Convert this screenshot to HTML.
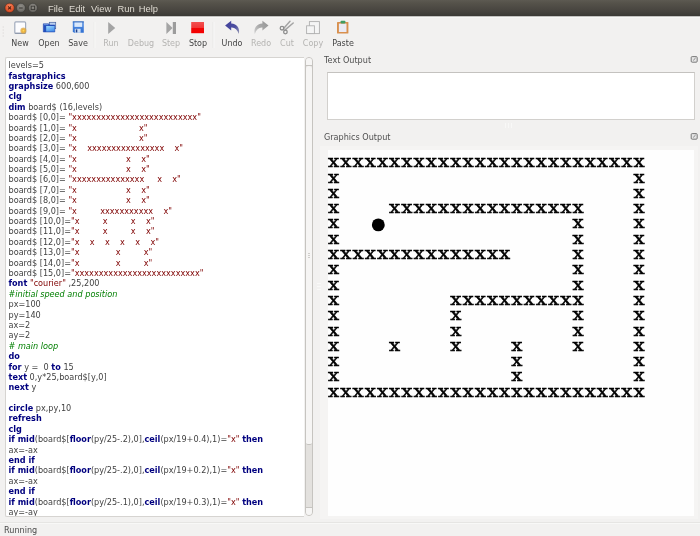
<!DOCTYPE html>
<html><head><meta charset="utf-8"><title>BASIC-256</title>
<style>
html,body{margin:0;padding:0;}
.abs,.tl{will-change:transform;}
body{width:700px;height:536px;overflow:hidden;background:#f2f1f0;font-family:"DejaVu Sans","Liberation Sans",sans-serif;position:relative;color:#3c3c3c;}
.abs{position:absolute;}
#title{left:0;top:0;width:700px;height:16px;background:linear-gradient(#5d5a52,#55524a 20%,#46433e 72%,#3b3935);}
#tline{left:0;top:16px;width:700px;height:2px;background:linear-gradient(#c4c3c1 50%,#f7f7f6 50%);}
#title .m{position:absolute;top:2.7px;font-size:9.4px;line-height:12px;color:#dfdbd2;font-family:"Liberation Sans","DejaVu Sans",sans-serif;white-space:nowrap;}
.wb{position:absolute;top:3.5px;width:9px;height:9px;border-radius:50%;}
#toolbar{left:0;top:16px;width:700px;height:36px;background:#f2f1f0;}
.tl{position:absolute;top:37.5px;font-size:8px;line-height:11px;color:#444;white-space:nowrap;transform:translateX(-50%);}
.tl.dis{color:#b5b4b2;}
.ic{position:absolute;}
#editor{left:5px;top:57px;width:298px;height:458px;background:#fff;border:1px solid #d6d4d1;border-right:none;border-radius:2px 0 0 2px;overflow:hidden;}
#code{position:absolute;left:2.5px;top:2.2px;font-size:8.13px;color:#424242;}
#code .ln{height:10.4px;line-height:10.4px;white-space:pre;}
#code b{color:#00007f;font-weight:bold;}
#code s{color:#7f0000;text-decoration:none;}
#code i{color:#007f00;font-style:italic;}
#vsb{left:305px;top:57px;width:8px;height:459px;background:#e3e1de;border:1px solid #c6c4c0;border-radius:4px;box-sizing:border-box;}
#vsb .up{position:absolute;left:0;top:0;width:6px;height:7px;background:#f6f5f4;border-bottom:1px solid #c6c4c0;border-radius:3px 3px 0 0;}
#vsb .th{position:absolute;left:0;top:8px;width:6px;height:378px;background:#f6f5f4;border-bottom:1px solid #c6c4c0;border-radius:3px 3px 2px 2px;}
#vsb .dn{position:absolute;left:0;bottom:0;width:6px;height:7px;background:#f6f5f4;border-top:1px solid #c6c4c0;border-radius:0 0 3px 3px;}
.lbl{font-size:8.1px;line-height:11px;color:#505050;white-space:nowrap;}
#tout{left:327px;top:72px;width:368px;height:48px;background:#fff;border:1px solid #d2d0cd;border-top-color:#c4c2bf;box-sizing:border-box;}
#gout{left:328px;top:150px;width:366px;height:366px;background:#fefefe;}
#gbg{left:320px;top:146px;width:378px;height:373px;background:#f5f4f3;}
#status{left:3.6px;top:524.7px;font-size:8.1px;line-height:11px;color:#4a4a4a;}
</style></head><body>
<div id="title" class="abs">
 <svg class="abs" style="left:0;top:0" width="44" height="16" viewBox="0 0 44 16">
  <defs>
   <radialGradient id="gcl" cx="0.5" cy="0.35" r="0.7"><stop offset="0" stop-color="#f58a62"/><stop offset="0.6" stop-color="#e5582e"/><stop offset="1" stop-color="#b9401f"/></radialGradient>
   <radialGradient id="ggr" cx="0.5" cy="0.35" r="0.7"><stop offset="0" stop-color="#8f8d87"/><stop offset="0.6" stop-color="#75736e"/><stop offset="1" stop-color="#55534f"/></radialGradient>
  </defs>
  <circle cx="9.6" cy="7.9" r="4.7" fill="url(#gcl)" stroke="#3a2a24" stroke-width="0.5"/>
  <path d="M8.1 6.4 L11.1 9.4 M11.1 6.4 L8.1 9.4" stroke="#5e2412" stroke-width="1.1"/>
  <circle cx="20.9" cy="7.9" r="4.6" fill="url(#ggr)" stroke="#33322e" stroke-width="0.5"/>
  <path d="M19.1 8 H22.7" stroke="#3c3b37" stroke-width="1.1"/>
  <circle cx="32.9" cy="7.9" r="4.6" fill="url(#ggr)" stroke="#33322e" stroke-width="0.5"/>
  <rect x="31.2" y="6.2" width="3.4" height="3.4" fill="none" stroke="#3c3b37" stroke-width="0.9"/>
 </svg>
 <span class="m" style="left:48px">File</span>
 <span class="m" style="left:69px">Edit</span>
 <span class="m" style="left:91px">View</span>
 <span class="m" style="left:117.5px">Run</span>
 <span class="m" style="left:138.8px">Help</span>
</div>
<div id="toolbar" class="abs"></div><div id="tline" class="abs"></div>
<!-- toolbar labels -->
<span class="tl" style="left:20px">New</span>
<span class="tl" style="left:49px">Open</span>
<span class="tl" style="left:78px">Save</span>
<span class="tl dis" style="left:110.5px">Run</span>
<span class="tl dis" style="left:140.5px">Debug</span>
<span class="tl dis" style="left:171px">Step</span>
<span class="tl" style="left:197.5px">Stop</span>
<span class="tl" style="left:232px">Undo</span>
<span class="tl dis" style="left:261px">Redo</span>
<span class="tl dis" style="left:287px">Cut</span>
<span class="tl dis" style="left:313px">Copy</span>
<span class="tl" style="left:343px">Paste</span>
<svg class="abs" style="left:0;top:16px" width="700" height="36" viewBox="0 16 700 36">
 <defs>
  <linearGradient id="gfold" x1="0" y1="0" x2="0.6" y2="1"><stop offset="0" stop-color="#9fdcff"/><stop offset="1" stop-color="#4a92ea"/></linearGradient>
  <linearGradient id="gsave" x1="0" y1="0" x2="0" y2="1"><stop offset="0" stop-color="#5b93e4"/><stop offset="1" stop-color="#2f6fd2"/></linearGradient>
  <linearGradient id="gstop" x1="0" y1="0" x2="0" y2="1"><stop offset="0" stop-color="#f25050"/><stop offset="0.5" stop-color="#f03838"/><stop offset="0.52" stop-color="#f00606"/><stop offset="1" stop-color="#f40000"/></linearGradient>
  <radialGradient id="gstar"><stop offset="0" stop-color="#ffe468"/><stop offset="0.45" stop-color="#eeb13a"/><stop offset="1" stop-color="#d49a30" stop-opacity="0.55"/></radialGradient>
 <linearGradient id="gundo" gradientUnits="userSpaceOnUse" x1="226" y1="24" x2="240" y2="33"><stop offset="0" stop-color="#43439c"/><stop offset="0.55" stop-color="#4c4ea0"/><stop offset="1" stop-color="#9a9cb4"/></linearGradient>
  <linearGradient id="gredo" gradientUnits="userSpaceOnUse" x1="268" y1="24" x2="254" y2="33"><stop offset="0" stop-color="#989898"/><stop offset="0.5" stop-color="#a8a8a8"/><stop offset="1" stop-color="#cfcfcf"/></linearGradient>
 </defs>
 <!-- New -->
 <rect x="14.8" y="21.9" width="10.8" height="11.6" rx="1" fill="#fcfcfe" stroke="#a2acbd" stroke-width="1.2"/>
 <rect x="15.2" y="32.6" width="10" height="1.3" fill="#909aac"/>
 <circle cx="23.4" cy="30.7" r="3.1" fill="url(#gstar)"/>
 <!-- Open -->
 <rect x="49.3" y="22.3" width="6.4" height="6.4" fill="#bcd0f0" stroke="#45629f" stroke-width="0.7"/>
 <path d="M43.3 23.8 H48.6 L49.6 25 H54.8 V32 H43.3 Z" fill="#2450bd" stroke="#1d43a8" stroke-width="0.5"/>
 <rect x="43.8" y="24.3" width="4.6" height="0.8" fill="#7fa6e8"/>
 <rect x="46.2" y="26" width="8.3" height="5.5" fill="url(#gfold)"/>
 <!-- Save -->
 <path d="M72.8 21.4 H83.8 V32.8 H74 L72.8 31.6 Z" fill="url(#gsave)"/>
 <rect x="72.8" y="21.4" width="11" height="1.1" fill="#3b6cb8"/>
 <rect x="74.4" y="22.5" width="7.8" height="4.4" fill="#d9e8fb"/>
 <rect x="74.8" y="28.8" width="5.8" height="4" fill="#cfe0f6"/>
 <rect x="75.8" y="29.4" width="1.5" height="3" fill="#1e3f88"/>
 <!-- Run -->
 <path d="M108.2 22 L115.2 28 L108.2 34 Z" fill="#a4a4a4"/>
 <!-- Step -->
 <path d="M166.4 22 L172.6 28 L166.4 34 Z" fill="#a4a4a4"/>
 <rect x="172.8" y="22" width="3.2" height="12" fill="#9c9c9c"/>
 <!-- Stop -->
 <rect x="191.2" y="22" width="12.8" height="11.2" fill="url(#gstop)"/>
 <!-- Undo -->
 <path d="M231.2 20.8 L225.1 25.6 L231.2 30.4 V27.6 C234.8 27.3 237.4 29.6 238.8 34 C240.2 28.4 237 23.8 231.2 23.6 Z" fill="url(#gundo)"/>
 <!-- Redo -->
 <path d="M262.4 20.8 L268.5 25.6 L262.4 30.4 V27.6 C258.8 27.3 256.2 29.6 254.8 34 C253.4 28.4 256.6 23.8 262.4 23.6 Z" fill="url(#gredo)"/>
 <!-- Cut -->
 <g stroke="#a4a4a4" fill="none" stroke-width="1.5" stroke-linecap="round">
  <path d="M293.2 23 L284.6 30.4"/><path d="M290 21.2 L283.6 28.4"/>
  <circle cx="282" cy="28.2" r="1.8" stroke="#8e8e8e" stroke-width="1.3"/><circle cx="285.4" cy="32" r="1.8" stroke="#8e8e8e" stroke-width="1.3"/>
 </g>
 <!-- Copy -->
 <g stroke="#b0b0b0" fill="#f5f5f5" stroke-width="0.9">
  <rect x="309.4" y="21.6" width="10" height="12"/>
  <rect x="306.6" y="25.8" width="7.8" height="7.8"/>
 </g>
 <!-- Paste -->
 <rect x="337" y="21.9" width="11.4" height="11.6" rx="0.6" fill="#d8904e"/>
 <rect x="338.9" y="23.6" width="7.6" height="8.4" fill="#eaeaf4"/>
 <rect x="340.6" y="20.7" width="4.8" height="2.7" rx="0.8" fill="#3f9c62"/>
 <!-- separators -->
 <rect x="93.5" y="22" width="1" height="26" fill="#ecebe9"/><rect x="94.5" y="22" width="1" height="26" fill="#f7f7f6"/>
 <rect x="212.5" y="22" width="1" height="26" fill="#e8e7e5"/><rect x="213.5" y="22" width="1" height="26" fill="#f8f8f7"/>
 <g fill="#dddcda"><circle cx="3.2" cy="27" r="0.7"/><circle cx="3.2" cy="30" r="0.7"/><circle cx="3.2" cy="33" r="0.7"/><circle cx="3.2" cy="36" r="0.7"/></g>
</svg>

<div id="editor" class="abs"><div id="code">
<div class="ln">levels=5</div>
<div class="ln"><b>fastgraphics</b></div>
<div class="ln"><b>graphsize</b> 600,600</div>
<div class="ln"><b>clg</b></div>
<div class="ln"><b>dim</b> board$ (16,levels)</div>
<div class="ln">board$ [0,0]= <s>"xxxxxxxxxxxxxxxxxxxxxxxxxx"</s></div>
<div class="ln">board$ [1,0]= <s>"x                        x"</s></div>
<div class="ln">board$ [2,0]= <s>"x                        x"</s></div>
<div class="ln">board$ [3,0]= <s>"x    xxxxxxxxxxxxxxxx    x"</s></div>
<div class="ln">board$ [4,0]= <s>"x                   x    x"</s></div>
<div class="ln">board$ [5,0]= <s>"x                   x    x"</s></div>
<div class="ln">board$ [6,0]= <s>"xxxxxxxxxxxxxxx     x    x"</s></div>
<div class="ln">board$ [7,0]= <s>"x                   x    x"</s></div>
<div class="ln">board$ [8,0]= <s>"x                   x    x"</s></div>
<div class="ln">board$ [9,0]= <s>"x         xxxxxxxxxxx    x"</s></div>
<div class="ln">board$ [10,0]=<s>"x         x         x    x"</s></div>
<div class="ln">board$ [11,0]=<s>"x         x         x    x"</s></div>
<div class="ln">board$ [12,0]=<s>"x    x    x    x    x    x"</s></div>
<div class="ln">board$ [13,0]=<s>"x              x         x"</s></div>
<div class="ln">board$ [14,0]=<s>"x              x         x"</s></div>
<div class="ln">board$ [15,0]=<s>"xxxxxxxxxxxxxxxxxxxxxxxxxx"</s></div>
<div class="ln"><b>font</b> <s>"courier"</s> ,25,200</div>
<div class="ln"><i>#initial speed and position</i></div>
<div class="ln">px=100</div>
<div class="ln">py=140</div>
<div class="ln">ax=2</div>
<div class="ln">ay=2</div>
<div class="ln"><i># main loop</i></div>
<div class="ln"><b>do</b></div>
<div class="ln"><b>for</b> y =  0 <b>to</b> 15</div>
<div class="ln"><b>text</b> 0,y*25,board$[y,0]</div>
<div class="ln"><b>next</b> y</div>
<div class="ln">&nbsp;</div>
<div class="ln"><b>circle</b> px,py,10</div>
<div class="ln"><b>refresh</b></div>
<div class="ln"><b>clg</b></div>
<div class="ln"><b>if mid</b>(board$[<b>floor</b>(py/25-.2),0],<b>ceil</b>(px/19+0.4),1)=<s>"x"</s> <b>then</b></div>
<div class="ln">ax=-ax</div>
<div class="ln"><b>end if</b></div>
<div class="ln"><b>if mid</b>(board$[<b>floor</b>(py/25-.2),0],<b>ceil</b>(px/19+0.2),1)=<s>"x"</s> <b>then</b></div>
<div class="ln">ax=-ax</div>
<div class="ln"><b>end if</b></div>
<div class="ln"><b>if mid</b>(board$[<b>floor</b>(py/25-.1),0],<b>ceil</b>(px/19+0.3),1)=<s>"x"</s> <b>then</b></div>
<div class="ln">ay=-ay</div>
</div></div>
<div id="vsb" class="abs"><div class="up"></div><div class="th"><i style="position:absolute;left:2px;top:187px;width:2px;height:1px;background:#d0cecb"></i><i style="position:absolute;left:2px;top:189px;width:2px;height:1px;background:#d0cecb"></i><i style="position:absolute;left:2px;top:191px;width:2px;height:1px;background:#d0cecb"></i></div><div class="dn"></div></div>
<span class="abs lbl" style="left:324px;top:54.8px">Text Output</span>
<div id="tout" class="abs"></div>
<span class="abs lbl" style="left:324px;top:132.3px">Graphics Output</span>
<div id="gbg" class="abs"></div><div id="gout" class="abs"></div>
<svg class="abs" style="left:0;top:0" width="700" height="536" viewBox="0 0 700 536">
 <g font-family="'DejaVu Serif','Liberation Serif',serif" font-size="17.5" fill="#000" stroke="#000" stroke-width="0.55" text-anchor="middle" transform="scale(1.13,1)">
<text x="295.22 306.04 316.85 327.66 338.48 349.29 360.11 370.92 381.73 392.55 403.36 414.18 424.99 435.81 446.62 457.43 468.25 479.06 489.88 500.69 511.50 522.32 533.13 543.95 554.76 565.58" y="167.3">xxxxxxxxxxxxxxxxxxxxxxxxxx</text>
<text x="295.22 565.58" y="182.6">xx</text>
<text x="295.22 565.58" y="197.9">xx</text>
<text x="295.22 349.29 360.11 370.92 381.73 392.55 403.36 414.18 424.99 435.81 446.62 457.43 468.25 479.06 489.88 500.69 511.50 565.58" y="213.2">xxxxxxxxxxxxxxxxxx</text>
<text x="295.22 511.50 565.58" y="228.5">xxx</text>
<text x="295.22 511.50 565.58" y="243.8">xxx</text>
<text x="295.22 306.04 316.85 327.66 338.48 349.29 360.11 370.92 381.73 392.55 403.36 414.18 424.99 435.81 446.62 511.50 565.58" y="259.1">xxxxxxxxxxxxxxxxx</text>
<text x="295.22 511.50 565.58" y="274.4">xxx</text>
<text x="295.22 511.50 565.58" y="289.7">xxx</text>
<text x="295.22 403.36 414.18 424.99 435.81 446.62 457.43 468.25 479.06 489.88 500.69 511.50 565.58" y="305.0">xxxxxxxxxxxxx</text>
<text x="295.22 403.36 511.50 565.58" y="320.3">xxxx</text>
<text x="295.22 403.36 511.50 565.58" y="335.6">xxxx</text>
<text x="295.22 349.29 403.36 457.43 511.50 565.58" y="350.9">xxxxxx</text>
<text x="295.22 457.43 565.58" y="366.2">xxx</text>
<text x="295.22 457.43 565.58" y="381.5">xxx</text>
<text x="295.22 306.04 316.85 327.66 338.48 349.29 360.11 370.92 381.73 392.55 403.36 414.18 424.99 435.81 446.62 457.43 468.25 479.06 489.88 500.69 511.50 522.32 533.13 543.95 554.76 565.58" y="396.8">xxxxxxxxxxxxxxxxxxxxxxxxxx</text>
 </g>
 <circle cx="378.3" cy="224.9" r="6.45" fill="#000"/>
</svg>
<svg class="abs" style="left:690px;top:55px" width="9" height="9" viewBox="0 0 9 9"><rect x="1.2" y="1.6" width="6" height="5.6" rx="1" fill="#e6e6e6" stroke="#6c6c6c" stroke-width="0.9"/><path d="M3.2 5.4 L5.6 3" stroke="#6c6c6c" stroke-width="0.8"/></svg>
<svg class="abs" style="left:690px;top:132px" width="9" height="9" viewBox="0 0 9 9"><rect x="1.2" y="1.6" width="6" height="5.6" rx="1" fill="#e6e6e6" stroke="#6c6c6c" stroke-width="0.9"/><path d="M3.2 5.4 L5.6 3" stroke="#6c6c6c" stroke-width="0.8"/></svg>
<div class="abs" style="left:0;top:522px;width:700px;height:1px;background:#e6e5e3"></div>
<div class="abs" style="left:0;top:523px;width:700px;height:1px;background:#f8f8f7"></div>
<div class="abs" style="left:505px;top:122.5px;width:1.4px;height:5px;background:#f8f8f7;box-shadow:3px 0 0 #f8f8f7,6px 0 0 #f8f8f7"></div>
<div class="abs" style="left:316.5px;top:283px;width:4px;height:1.2px;background:#f9f9f8;box-shadow:0 3px 0 #f9f9f8,0 6px 0 #f9f9f8"></div>
<span id="status" class="abs">Running</span>
</body></html>
